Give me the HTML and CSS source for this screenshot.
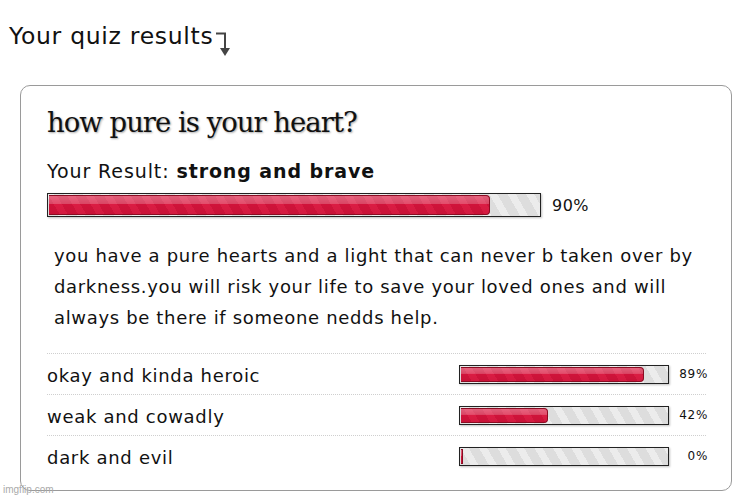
FILE: index.html
```html
<!DOCTYPE html>
<html>
<head>
<meta charset="utf-8">
<link rel="stylesheet" href="styles.css">
</head>
<body>
<div class="page">
  <div class="header">
    <span class="header-text">Your quiz results</span>
    <svg class="header-arrow" width="16" height="26" viewBox="0 0 16 26">
      <path d="M0 2.5 H9 V18" fill="none" stroke="#444" stroke-width="2"/>
      <path d="M4 17 H14 L9 25 Z" fill="#444"/>
    </svg>
  </div>
  <div class="card">
    <h1 class="quiz-title">how pure is your heart?</h1>
    <div class="result-line">Your Result: <b>strong and brave</b></div>
    <div class="main-bar-row">
      <div class="bar bar-main"><div class="fill" style="width:90%"></div></div>
      <span class="main-pct">90%</span>
    </div>
    <p class="desc">you have a pure hearts and a light that can never b taken over by darkness.you will risk your life to save your loved ones and will always be there if someone nedds help.</p>
    <div class="others">
      <div class="row">
        <span class="row-label">okay and kinda heroic</span>
        <div class="bar bar-small"><div class="fill" style="width:89%"></div></div>
        <span class="row-pct">89%</span>
      </div>
      <div class="row">
        <span class="row-label">weak and cowadly</span>
        <div class="bar bar-small"><div class="fill" style="width:42%"></div></div>
        <span class="row-pct">42%</span>
      </div>
      <div class="row">
        <span class="row-label">dark and evil</span>
        <div class="bar bar-small"><div class="fill fill-zero" style="width:1%"></div></div>
        <span class="row-pct">0%</span>
      </div>
    </div>
  </div>
  <div class="watermark">imgflip.com</div>
</div>
</body>
</html>
```
FILE: styles.css
```css
html, body {
  margin: 0;
  padding: 0;
  background: #fff;
}
.page {
  position: relative;
  width: 738px;
  height: 499px;
  overflow: hidden;
  font-family: "DejaVu Sans", Verdana, sans-serif;
  color: #111;
}
.header {
  display: flex;
  align-items: flex-start;
  padding: 21px 0 0 9px;
  height: 64px;
  box-sizing: border-box;
}
.header-text {
  font-size: 23.5px;
  line-height: 30px;
  letter-spacing: 0.7px;
  color: #111;
}
.header-arrow {
  margin-top: 10px;
  margin-left: 3px;
}
.card {
  margin-left: 20px;
  margin-top: 21px;
  width: 712px;
  height: 406px;
  box-sizing: border-box;
  border: 1px solid #9a9a9a;
  border-radius: 10px;
  padding: 20px 25px 0 26px;
}
.quiz-title {
  margin: 0;
  font-family: "DejaVu Serif", Georgia, serif;
  font-weight: normal;
  font-size: 27.5px;
  line-height: 32px;
  letter-spacing: -1px;
  color: #111;
  text-shadow: 1px 1px 2px rgba(0,0,0,0.35);
}
.result-line {
  margin-top: 21px;
  font-size: 19px;
  line-height: 24px;
  letter-spacing: 0.9px;
}
.result-line b {
  font-weight: bold;
}
.main-bar-row {
  display: flex;
  align-items: center;
  margin-top: 10px;
}
.bar {
  box-sizing: border-box;
  border: 1px solid #222;
  padding: 1px;
  background-color: #e2e2e2;
  background-image: repeating-linear-gradient(60deg, #dddddd 0 9px, #ececec 9px 16px);
  box-shadow: 1px 1px 2px rgba(0,0,0,0.25);
  position: relative;
}
.bar-main {
  width: 494px;
  height: 24px;
}
.fill {
  height: 100%;
  box-sizing: border-box;
  border: 1px solid #8a0c22;
  border-left: 0;
  border-radius: 0 4px 4px 0;
  background-color: #d4143b;
  background-image:
    linear-gradient(to bottom, rgba(255,255,255,0.32) 0%, rgba(255,255,255,0.22) 42%, rgba(0,0,0,0) 46%, rgba(0,0,0,0.04) 100%),
    repeating-linear-gradient(60deg, #d0133a 0 9px, #db1c43 9px 16px);
}
.fill-zero {
  border-radius: 0;
}
.main-pct {
  margin-left: 11px;
  font-size: 16px;
  letter-spacing: 0.5px;
}
.desc {
  margin: 23px 0 0 7px;
  font-size: 18px;
  line-height: 31px;
  letter-spacing: 0.66px;
  width: 648px;
}
.others {
  margin-top: 20px;
  width: 659px;
}
.row {
  display: flex;
  align-items: center;
  height: 41px;
  border-top: 1px dotted #cfcfcf;
  box-sizing: border-box;
}
.row-label {
  font-size: 18px;
  letter-spacing: 0.7px;
  width: 412px;
  padding-top: 3px;
}
.bar-small {
  width: 210px;
  height: 19px;
}
.row-pct {
  width: 39px;
  text-align: right;
  font-size: 12px;
  letter-spacing: 0.7px;
  margin-right: -2px;
}
.watermark {
  position: absolute;
  left: 3px;
  top: 484px;
  font-family: "Liberation Sans", Arial, sans-serif;
  font-size: 10px;
  color: #aaa;
}
```
